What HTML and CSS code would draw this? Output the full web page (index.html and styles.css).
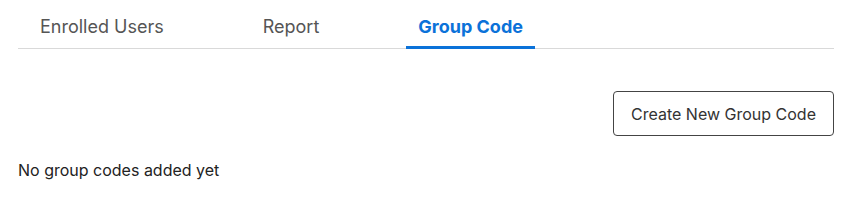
FILE: index.html
```html
<!DOCTYPE html>
<html lang="en">
<head>
    <meta charset="UTF-8">
    <meta name="viewport" content="width=device-width, initial-scale=1.0">
    <title>Group Code</title>
    <link rel="stylesheet" href="styles.css">
</head>
<body>
    <div class="page">
        <div class="tabs">
            <div class="tab">Enrolled Users</div>
            <div class="tab">Report</div>
            <div class="tab active">Group Code</div>
        </div>
        <div class="actions">
            <button class="btn">Create New Group Code</button>
        </div>
        <p class="empty">No group codes added yet</p>
    </div>
</body>
</html>
```

FILE: styles.css
```css
body {
    margin: 0;
    font-family: Inter, "Noto Sans", sans-serif;
    background: #fff;
    color: #222;
}

.page {
    padding: 0 10px 0 18px;
}

.tabs {
    display: flex;
    gap: 75px;
    padding-left: 10px;
    border-bottom: 1px solid #d9d9d9;
}

.tab {
    font-size: 18px;
    line-height: 22px;
    color: #555;
    padding: 16px 12px 8px;
    border-bottom: 3px solid transparent;
    margin-bottom: -1px;
}

.tab.active {
    color: #0b72d9;
    font-weight: 700;
    border-bottom-color: #0b72d9;
}

.actions {
    display: flex;
    justify-content: flex-end;
    margin-top: 42px;
}

.btn {
    font-family: inherit;
    font-size: 16px;
    color: #333;
    background: #fff;
    border: 1px solid #444;
    border-radius: 4px;
    width: 221px;
    height: 45px;
    padding: 0;
}

.empty {
    margin: 24px 0 0;
    font-size: 16px;
    line-height: 20px;
    color: #222;
}
```
